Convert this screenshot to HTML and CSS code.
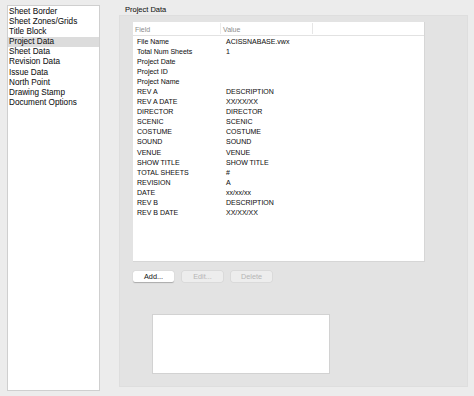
FILE: index.html
```html
<!DOCTYPE html>
<html>
<head>
<meta charset="utf-8">
<link rel="stylesheet" href="styles.css">
</head>
<body>
<div class="window">
  <ul class="sidebar">
    <li>Sheet Border</li>
    <li>Sheet Zones/Grids</li>
    <li>Title Block</li>
    <li class="selected">Project Data</li>
    <li>Sheet Data</li>
    <li>Revision Data</li>
    <li>Issue Data</li>
    <li>North Point</li>
    <li>Drawing Stamp</li>
    <li>Document Options</li>
  </ul>
  <div class="main">
    <div class="title">Project Data</div>
    <div class="panel">
      <div class="table">
        <div class="thead">
          <div class="th c1">Field</div>
          <div class="th c2">Value</div>
          <div class="th c3"></div>
        </div>
        <div class="tbody">
          <div class="tr"><span class="c1">File Name</span><span class="c2">ACISSNABASE.vwx</span></div>
          <div class="tr"><span class="c1">Total Num Sheets</span><span class="c2">1</span></div>
          <div class="tr"><span class="c1">Project Date</span><span class="c2"></span></div>
          <div class="tr"><span class="c1">Project ID</span><span class="c2"></span></div>
          <div class="tr"><span class="c1">Project Name</span><span class="c2"></span></div>
          <div class="tr"><span class="c1">REV A</span><span class="c2">DESCRIPTION</span></div>
          <div class="tr"><span class="c1">REV A DATE</span><span class="c2">XX/XX/XX</span></div>
          <div class="tr"><span class="c1">DIRECTOR</span><span class="c2">DIRECTOR</span></div>
          <div class="tr"><span class="c1">SCENIC</span><span class="c2">SCENIC</span></div>
          <div class="tr"><span class="c1">COSTUME</span><span class="c2">COSTUME</span></div>
          <div class="tr"><span class="c1">SOUND</span><span class="c2">SOUND</span></div>
          <div class="tr"><span class="c1">VENUE</span><span class="c2">VENUE</span></div>
          <div class="tr"><span class="c1">SHOW TITLE</span><span class="c2">SHOW TITLE</span></div>
          <div class="tr"><span class="c1">TOTAL SHEETS</span><span class="c2">#</span></div>
          <div class="tr"><span class="c1">REVISION</span><span class="c2">A</span></div>
          <div class="tr"><span class="c1">DATE</span><span class="c2">xx/xx/xx</span></div>
          <div class="tr"><span class="c1">REV B</span><span class="c2">DESCRIPTION</span></div>
          <div class="tr"><span class="c1">REV B DATE</span><span class="c2">XX/XX/XX</span></div>
        </div>
      </div>
      <div class="buttons">
        <button class="btn">Add...</button>
        <button class="btn disabled">Edit...</button>
        <button class="btn disabled">Delete</button>
      </div>
      <div class="listbox"></div>
    </div>
  </div>
</div>
</body>
</html>
```

FILE: styles.css
```css
* { box-sizing: border-box; }
html, body {
  margin: 0;
  padding: 0;
  width: 474px;
  height: 396px;
  overflow: hidden;
  background: #ececec;
  font-family: "Liberation Sans", Arial, sans-serif;
  color: #141414;
}
.window {
  display: flex;
  padding: 5px 6px 0 7px;
  height: 396px;
}
.sidebar {
  list-style: none;
  margin: 0;
  padding: 1px 0 0 0;
  width: 93px;
  height: 386px;
  background: #fff;
  border: 1px solid #cfcfcf;
  flex: none;
}
.sidebar li {
  height: 10.1px;
  line-height: 10.1px;
  font-size: 8.2px;
  padding-left: 1px;
  white-space: nowrap;
  -webkit-text-stroke: 0.06px #141414;
}
.sidebar li.selected {
  background: #dcdcdc;
}
.main {
  flex: 1;
  margin-left: 19px;
  margin-top: -5px;
  display: flex;
  flex-direction: column;
}
.title {
  height: 15px;
  padding-top: 5px;
  padding-left: 6px;
  font-size: 7.5px;
  line-height: 10px;
  -webkit-text-stroke: 0.06px #141414;
}
.panel {
  width: 349px;
  height: 372px;
  background: #e3e3e3;
  border: 1px solid #dedede;
  padding: 6px 0 0 13px;
}
.table {
  width: 292px;
  height: 240px;
  background: #fff;
  border-right: 1px solid #d6d6d6;
  border-bottom: 1px solid #d6d6d6;
  font-size: 7px;
}
.thead {
  display: flex;
  height: 14px;
  border-bottom: 1px solid #e2e2e2;
}
.th {
  color: #8c8c8c;
  line-height: 13px;
  font-size: 7px;
}
.thead .c1 { width: 88px; padding-left: 2px; border-right: 1px solid #ececec; margin: 1px 0; }
.thead .c2 { width: 92px; padding-left: 2px; border-right: 1px solid #e6e6e6; margin: 1px 0; }
.tbody {
  padding-top: 0.5px;
}
.tr {
  display: flex;
  height: 10.1px;
  line-height: 10.1px;
  white-space: nowrap;
  -webkit-text-stroke: 0.05px #141414;
}
.tr .c1 { width: 92px; padding-left: 4px; }
.tr .c2 { width: 100px; padding-left: 1px; }
.buttons {
  display: flex;
  gap: 8px;
  margin-top: 9px;
}
.btn {
  width: 41px;
  height: 11px;
  padding: 0;
  margin: 0;
  font-family: "Liberation Sans", Arial, sans-serif;
  font-size: 7.3px;
  line-height: 10px;
  background: #fff;
  color: #141414;
  border: none;
  border-radius: 2px;
  box-shadow: 0 0.5px 1px rgba(0,0,0,0.25);
}
.btn.disabled {
  background: #ededed;
  color: #b5b5b5;
  box-shadow: 0 0 0 0.5px rgba(0,0,0,0.08);
}
.listbox {
  margin-top: 32px;
  margin-left: 19px;
  width: 178px;
  height: 60px;
  background: #fff;
  border: 1px solid #d2d2d2;
}
```
